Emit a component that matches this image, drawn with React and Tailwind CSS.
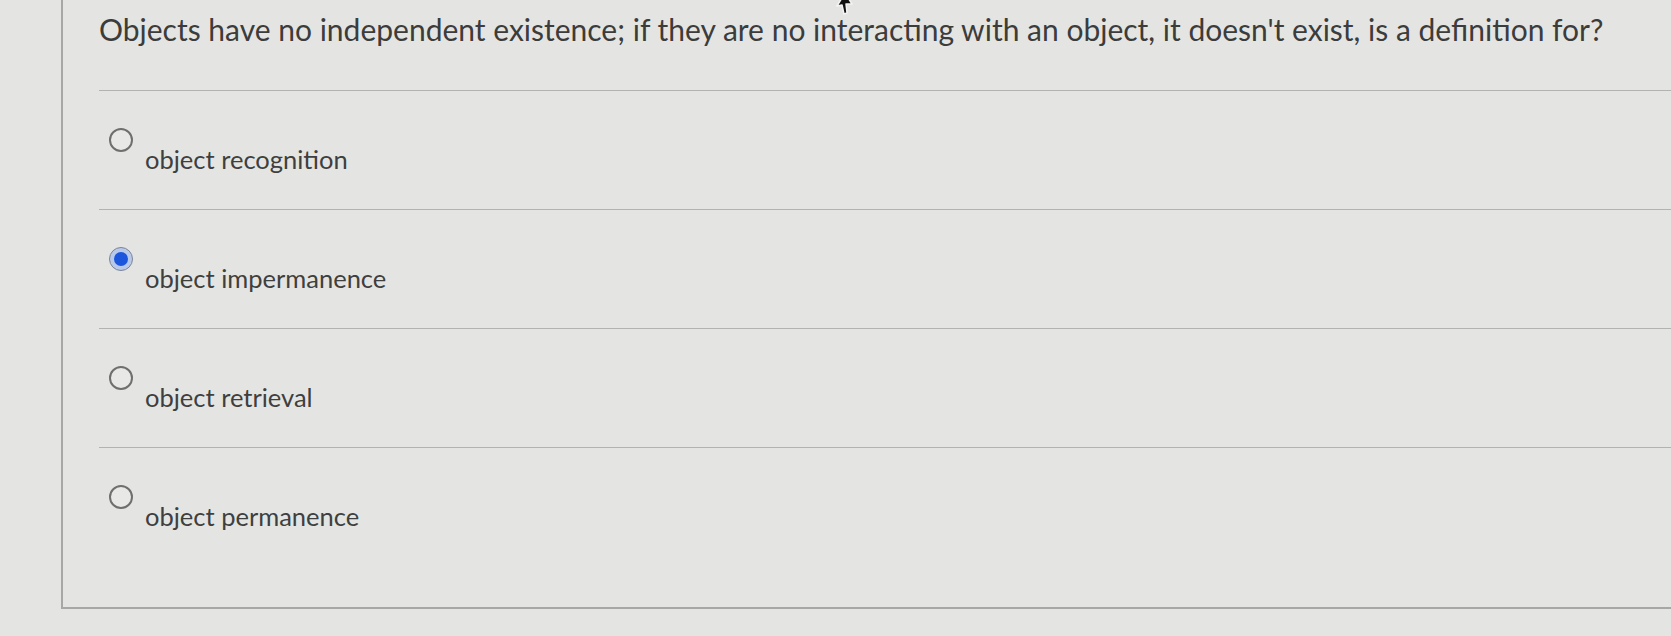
import React from "react";

const options = [
  { label: "object recognition", checked: false },
  { label: "object impermanence", checked: true },
  { label: "object retrieval", checked: false },
  { label: "object permanence", checked: false },
];

function Radio({ checked }) {
  if (checked) {
    return (
      <span className="flex h-[24px] w-[24px] shrink-0 items-center justify-center rounded-full border-[1.5px] border-[#7d8496] bg-[#b9c9ea]">
        <span className="h-[14px] w-[14px] rounded-full bg-[#1b56dc]" />
      </span>
    );
  }
  return (
    <span className="block h-[24px] w-[24px] shrink-0 rounded-full border-[2px] border-[#6f706e] bg-[#e8e9e7]" />
  );
}

function Cursor() {
  return (
    <svg
      className="absolute left-[834px] top-[-8px]"
      width="22"
      height="24"
      viewBox="0 0 22 24"
    >
      <path
        d="M11 1 L3 14 L8 13 L10 22 L13 21 L12 12 L18 12 Z"
        fill="#111"
        stroke="#f4f4f4"
        strokeWidth="1.5"
        strokeLinejoin="round"
      />
    </svg>
  );
}

export default function App() {
  return (
    <div
      className="relative h-[636px] w-full overflow-hidden bg-[#e4e5e3]"
      style={{ fontFamily: "Lato, 'Open Sans', sans-serif" }}
    >
      <Cursor />
      <div className="ml-[61px] h-[609px] border-b-[2px] border-l-[2px] border-[#a7a8a6] pl-[36px]">
        <h1 className="flex h-[90px] items-start pt-[11px] text-[30px] font-normal leading-[36px] text-[#3b3c3b] whitespace-nowrap">
          Objects have no independent existence; if they are no interacting with an object, it doesn't exist, is a definition for?
        </h1>
        {options.map((o) => (
          <div
            key={o.label}
            className="flex h-[119px] items-start gap-[12px] border-t border-[#b2b3b1] pl-[10px] pt-[37px]"
          >
            <Radio checked={o.checked} />
            <span className="mt-[16px] text-[25.5px] leading-[30px] text-[#3e3f3e]">
              {o.label}
            </span>
          </div>
        ))}
      </div>
    </div>
  );
}
